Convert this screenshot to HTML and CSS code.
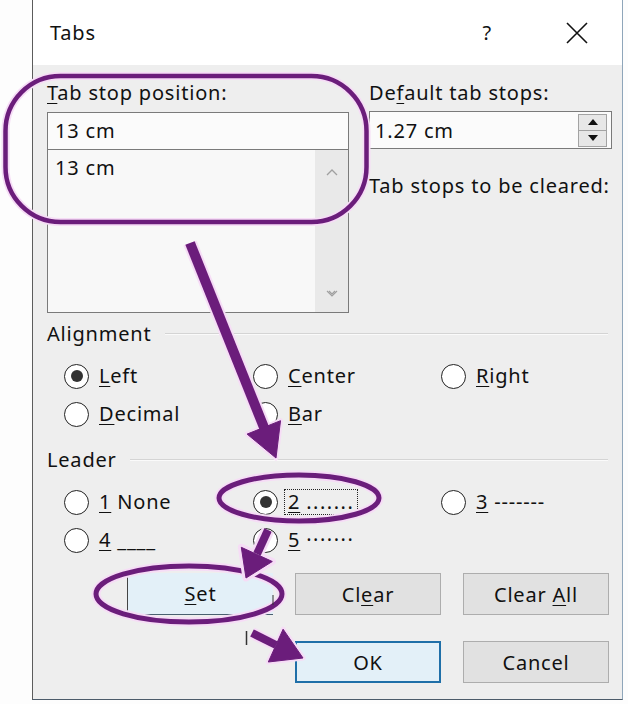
FILE: index.html
```html
<!DOCTYPE html>
<html>
<head>
<meta charset="utf-8">
<title>Tabs</title>
<link rel="stylesheet" href="styles.css">
</head>
<body>
<div class="window">
  <div class="titlebar">
    <span class="title">Tabs</span>
    <span class="help">?</span>
    <svg class="close" width="22" height="22" viewBox="0 0 22 22"><path d="M1 1 L21 21 M21 1 L1 21" stroke="#111" stroke-width="1.6" fill="none"/></svg>
  </div>
  <div class="content">
    <div class="top">
      <div class="col">
        <div class="label"><u>T</u>ab stop position:</div>
        <div class="input">13 cm</div>
        <div class="listbox">
          <div class="list-items"><div class="list-item">13 cm</div></div>
          <div class="scrollbar">
            <svg width="14" height="10" viewBox="0 0 14 10"><path d="M2 8 L7 3 L12 8" stroke="#a0a0a0" stroke-width="1.3" fill="none"/></svg>
            <svg width="14" height="10" viewBox="0 0 14 10"><path d="M2 2 L7 7 L12 2 M4 2 L7 5 L10 2" stroke="#a0a0a0" stroke-width="1.1" fill="none"/></svg>
          </div>
        </div>
      </div>
      <div class="col">
        <div class="label">De<u>f</u>ault tab stops:</div>
        <div class="spinner">
          <span class="spin-value">1.27 cm</span>
          <div class="spin-btns">
            <div class="spin"><svg width="10" height="6" viewBox="0 0 10 6"><path d="M0 6 L5 0 L10 6 Z" fill="#111"/></svg></div>
            <div class="spin"><svg width="10" height="6" viewBox="0 0 10 6"><path d="M0 0 L5 6 L10 0 Z" fill="#111"/></svg></div>
          </div>
        </div>
        <div class="label cleared">Tab stops to be cleared:</div>
      </div>
    </div>

    <div class="group-head"><span>Alignment</span><div class="rule"></div></div>
    <div class="radios">
      <div class="opt"><span class="radio checked"></span><span class="opt-text"><u>L</u>eft</span></div>
      <div class="opt"><span class="radio"></span><span class="opt-text"><u>C</u>enter</span></div>
      <div class="opt"><span class="radio"></span><span class="opt-text"><u>R</u>ight</span></div>
      <div class="opt"><span class="radio"></span><span class="opt-text"><u>D</u>ecimal</span></div>
      <div class="opt"><span class="radio"></span><span class="opt-text"><u>B</u>ar</span></div>
    </div>

    <div class="group-head leader-head"><span>Leader</span><div class="rule"></div></div>
    <div class="radios">
      <div class="opt"><span class="radio"></span><span class="opt-text"><u>1</u> None</span></div>
      <div class="opt"><span class="radio checked"></span><span class="opt-text focus"><u>2</u> <span class="dots">.......</span></span></div>
      <div class="opt"><span class="radio"></span><span class="opt-text"><u>3</u> -------</span></div>
      <div class="opt"><span class="radio"></span><span class="opt-text"><u>4</u> ____</span></div>
      <div class="opt"><span class="radio"></span><span class="opt-text"><u>5</u> <span class="dots">·······</span></span></div>
    </div>

    <div class="buttons">
      <div class="btn btn-set"><span><u>S</u>et</span></div>
      <div class="btn"><span>Cl<u>e</u>ar</span></div>
      <div class="btn"><span>Clear <u>A</u>ll</span></div>
      <div class="btn btn-ok"><span>OK</span></div>
      <div class="btn"><span>Cancel</span></div>
    </div>
  </div>
</div>

<svg class="annot" width="628" height="704" viewBox="0 0 628 704">
  <g fill="none" stroke="#f6dcf6" stroke-linejoin="round">
    <rect x="5.5" y="76" width="361" height="146" rx="55" ry="55" stroke-width="8"/>
    <line x1="190" y1="243" x2="265" y2="430" stroke-width="14"/>
    <polygon points="276,458 280.5,420.7 247.1,434.1" stroke-width="5"/>
    <ellipse cx="299" cy="498" rx="80" ry="23" stroke-width="9"/>
    <ellipse cx="189" cy="594" rx="93" ry="28" stroke-width="9"/>
    <line x1="252" y1="633" x2="276" y2="645" stroke-width="12"/>
    <polygon points="303,658 268.3,662 283.1,629.2" stroke-width="5"/>
  </g>
  <g fill="none" stroke="#6b1d7b" stroke-linejoin="round">
    <rect x="5.5" y="76" width="361" height="146" rx="55" ry="55" stroke-width="4.5"/>
    <line x1="190" y1="243" x2="265" y2="430" stroke-width="10"/>
    <polygon points="276,458 280.5,420.7 247.1,434.1" fill="#6b1d7b" stroke-width="1"/>
    <ellipse cx="299" cy="498" rx="80" ry="23" stroke-width="5"/>
    <ellipse cx="189" cy="594" rx="93" ry="28" stroke-width="5"/>
    <line x1="252" y1="633" x2="276" y2="645" stroke-width="8"/>
    <polygon points="303,658 268.3,662 283.1,629.2" fill="#6b1d7b" stroke-width="1"/>
  </g>
  <g stroke-linejoin="round">
    <line x1="268" y1="530" x2="257" y2="554" stroke="#f6dcf6" stroke-width="13"/>
    <polygon points="246,578 272.3,561.5 241.3,547.3" fill="none" stroke="#f6dcf6" stroke-width="7"/>
    <line x1="268" y1="530" x2="257" y2="554" stroke="#6b1d7b" stroke-width="8"/>
    <polygon points="246,578 272.3,561.5 241.3,547.3" fill="#6b1d7b" stroke="#6b1d7b" stroke-width="1"/>
  </g>
  <line x1="246.5" y1="631" x2="246.5" y2="645" stroke="#333" stroke-width="1.5"/>
  <line x1="273" y1="595" x2="273" y2="605" stroke="#333" stroke-width="1"/>
</svg>
</body>
</html>
```
FILE: styles.css
```css
html, body {
  margin: 0;
  padding: 0;
  background: #fdfdfd;
}

body {
  font-family: "Noto Sans", "Open Sans", sans-serif;
  font-size: 20px;
  letter-spacing: 0.8px;
  color: #111;
  width: 628px;
  height: 704px;
  overflow: hidden;
}

u {
  text-decoration: underline;
  text-underline-offset: 3px;
  text-decoration-thickness: 1px;
}

.window {
  margin-left: 32px;
  width: 589px;
  border-left: 1px solid #5c5c5c;
  border-right: 1px solid #8fa6ba;
  border-bottom: 1px solid #4c5b6a;
  background: #eeeeee;
}

.titlebar {
  height: 65px;
  background: #ffffff;
  display: flex;
  align-items: center;
  padding: 0 34px 0 17px;
}

.title {
  flex: 1;
}

.help {
  margin-right: 74px;
}

.close {
  display: block;
}

.content {
  padding: 16px 10px 16px 14px;
}

.top {
  display: grid;
  grid-template-columns: 302px 243px;
  column-gap: 20px;
}

.label {
  line-height: 24px;
  white-space: nowrap;
}

.input {
  margin-top: 7px;
  height: 36px;
  border: 1px solid #7a7a7a;
  background: #fbfbfb;
  padding-left: 7px;
  line-height: 36px;
}

.listbox {
  height: 162px;
  border: 1px solid #7a7a7a;
  border-top: none;
  background: #f8f8f8;
  display: flex;
}

.list-items {
  flex: 1;
  padding: 6px 0 0 7px;
}

.list-item {
  line-height: 24px;
}

.scrollbar {
  width: 33px;
  background: #e9e9e9;
  display: flex;
  flex-direction: column;
  align-items: center;
  justify-content: space-between;
  padding: 17px 0 13px;
}

.scrollbar svg {
  display: block;
}

.spinner {
  margin-top: 6px;
  height: 36px;
  border: 1px solid #7a7a7a;
  background: #fbfbfb;
  display: flex;
  align-items: center;
  padding-left: 5px;
}

.spin-value {
  flex: 1;
}

.spin-btns {
  width: 29px;
  height: 33px;
  margin-right: 4px;
  display: flex;
  flex-direction: column;
  border: 1px solid #a3a3a3;
  box-sizing: border-box;
  background: #e7e7e7;
}

.spin {
  flex: 1;
  display: flex;
  align-items: center;
  justify-content: center;
}

.spin + .spin {
  border-top: 1px solid #a3a3a3;
}

.cleared {
  margin-top: 25px;
}

.group-head {
  margin-top: 9px;
  display: flex;
  align-items: center;
  line-height: 24px;
}

.group-head .rule {
  flex: 1;
  margin: 0 4px 0 13px;
  border-top: 1px solid #d4d4d4;
  border-bottom: 1px solid #fafafa;
}

.leader-head {
  margin-top: 19px;
}

.radios {
  margin-top: 15px;
  padding-left: 17px;
  display: grid;
  grid-template-columns: 189px 188px auto;
  grid-auto-rows: 30px;
  row-gap: 8px;
}

.opt {
  display: flex;
  align-items: center;
}

.radio {
  width: 25px;
  height: 25px;
  box-sizing: border-box;
  border: 1.5px solid #222;
  border-radius: 50%;
  background: #fff;
  display: flex;
  align-items: center;
  justify-content: center;
  flex: none;
}

.radio.checked::after {
  content: "";
  width: 12px;
  height: 12px;
  border-radius: 50%;
  background: #333;
}

.opt-text {
  margin-left: 10px;
  white-space: nowrap;
  line-height: 24px;
}

.opt-text.focus {
  margin-left: 6px;
  padding: 0 3px 0 3px;
  border: 1px dotted #222;
}

.dots {
  letter-spacing: 1.5px;
}

.buttons {
  margin-top: 18px;
  padding-left: 80px;
  display: grid;
  grid-template-columns: repeat(3, 146px);
  grid-auto-rows: 42px;
  column-gap: 22px;
  row-gap: 26px;
}

.btn {
  box-sizing: border-box;
  border: 1px solid #adadad;
  background: #e1e1e1;
  display: flex;
  align-items: center;
  justify-content: center;
  white-space: nowrap;
}

.btn-set {
  background: #e3f0f8;
  border: none;
  border-left: 1.5px solid #444;
  border-bottom: 1.5px solid #4a6070;
}

.btn-ok {
  grid-column: 2;
  border: 2px solid #1f6fa8;
  background: #e3f0f8;
}

.annot {
  position: absolute;
  left: 0;
  top: 0;
  pointer-events: none;
}
```
